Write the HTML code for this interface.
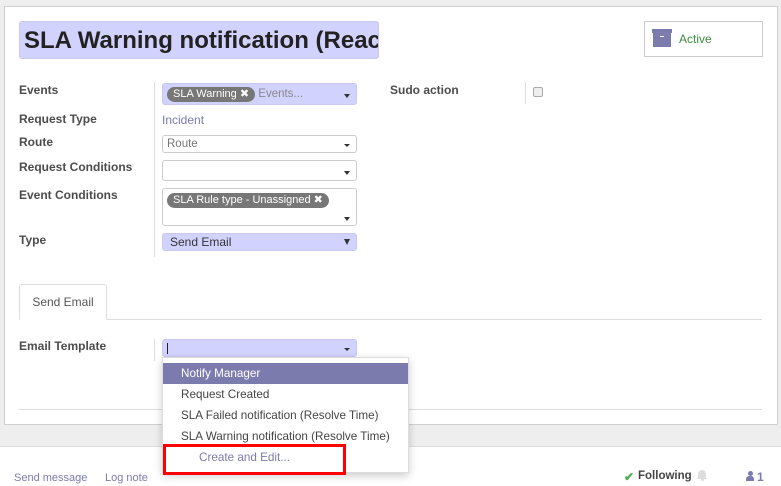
<!DOCTYPE html>
<html><head><style>
*{box-sizing:border-box}
body{margin:0;width:781px;height:486px;background:#eeeeee;font-family:"Liberation Sans",sans-serif;font-size:12px;color:#4c4c4c;position:relative;overflow:hidden}
.abs{position:absolute}
.sheet{left:4px;top:6px;width:774px;height:419px;background:#fff;border:1px solid #d0d0d0}
.lbl{position:absolute;left:19px;font-weight:bold;color:#4c4c4c;font-size:12px}
.inp{position:absolute;left:162px;width:195px;border:1px solid #ccc;border-radius:3px;background:#fff}
.lav{background:#d2d2ff;border-color:#c8c8f0}
.tag{display:inline-block;background:#777;color:#fff;border-radius:9px;padding:1px 6px;font-size:11px;line-height:13px}
.caret{position:absolute;right:6px;width:0;height:0;border-left:3px solid transparent;border-right:3px solid transparent;border-top:4px solid #333}
.vl{position:absolute;border-left:1px solid #ddd}
.dd div{height:21px;line-height:21px;padding-left:18px;font-size:11.7px;color:#444}
</style></head><body>
<div class="abs sheet"></div>
<div class="abs" style="left:19px;top:21px;width:360px;height:38px;background:#d2d2ff;border:1px solid #c8c8f0;border-radius:3px;overflow:hidden;white-space:nowrap;font-size:24px;font-weight:bold;color:#222;line-height:38px;padding-left:4px">SLA Warning notification (Reaction</div>
<div class="abs" style="left:644px;top:21px;width:119px;height:36px;border:1px solid #ccc"></div>
<div class="abs" style="left:652px;top:29px;width:20px;height:4px;background:#7c7bad"></div>
<div class="abs" style="left:653px;top:33px;width:18px;height:14px;background:#7c7bad"></div>
<div class="abs" style="left:660px;top:36px;width:4px;height:1px;background:#fff"></div>
<div class="abs" style="left:679px;top:32px;color:#3d8b3d;font-size:12px">Active</div>

<div class="vl" style="left:154px;top:82px;height:175px"></div>
<div class="vl" style="left:525px;top:82px;height:22px"></div>
<div class="lbl" style="top:83px">Events</div>
<div class="lbl" style="top:112px">Request Type</div>
<div class="lbl" style="top:135px">Route</div>
<div class="lbl" style="top:160px">Request Conditions</div>
<div class="lbl" style="top:188px">Event Conditions</div>
<div class="lbl" style="top:233px">Type</div>
<div class="lbl" style="left:390px;top:83px">Sudo action</div>
<div class="abs" style="left:533px;top:87px;width:10px;height:10px;border:1px solid #aaa;border-radius:2px;background:#eee"></div>

<div class="inp lav" style="top:83px;height:22px;padding:3px 4px;font-size:11.5px"><span class="tag">SLA Warning ✖</span><span style="color:#888"> Events...</span><div class="caret" style="top:10px"></div></div>
<div class="abs" style="left:162px;top:113px;color:#7c7bad">Incident</div>
<div class="inp" style="top:135px;height:18px;padding:2px 4px;color:#777;font-size:11.5px">Route<div class="caret" style="top:8px;border-top-width:3px"></div></div>
<div class="inp" style="top:160px;height:21px"><div class="caret" style="top:10px"></div></div>
<div class="inp" style="top:188px;height:38px;padding:3px 4px"><span class="tag">SLA Rule type - Unassigned ✖</span><div class="caret" style="top:28px"></div></div>
<div class="inp lav" style="top:233px;height:18px;padding:1px 7px;font-size:12px;color:#333">Send Email<div class="caret" style="top:5px;border-left-width:3.5px;border-right-width:3.5px;border-top-width:6px"></div></div>

<div class="abs" style="left:19px;top:319px;width:743px;border-top:1px solid #ddd"></div>
<div class="abs" style="left:19px;top:284px;width:88px;height:36px;border:1px solid #ddd;border-bottom:1px solid #fff;border-radius:3px 3px 0 0;background:#fff;text-align:center;line-height:34px;color:#555;font-size:12px">Send Email</div>
<div class="lbl" style="top:339px">Email Template</div>
<div class="vl" style="left:154px;top:339px;height:22px"></div>
<div class="inp lav" style="top:339px;height:18px"><div class="abs" style="left:4px;top:3px;width:1px;height:11px;background:#222"></div><div class="caret" style="top:8px;border-top-width:3px"></div></div>
<div class="abs" style="left:19px;top:409px;width:743px;border-top:1px solid #ddd"></div>

<div class="abs" style="left:0;top:446px;width:781px;height:40px;background:#fff;border-top:1px solid #ddd"></div>
<div class="abs" style="left:14px;top:472px;color:#7c7bad;font-size:11px">Send message</div>
<div class="abs" style="left:105px;top:472px;color:#7c7bad;font-size:11px">Log note</div>
<div class="abs" style="left:624px;top:470px;color:#4caf50;font-weight:bold">✔</div>
<div class="abs" style="left:638px;top:470px;font-weight:bold;color:#444;font-size:11.5px">Following</div>
<div class="abs" style="left:697px;top:470px;width:10px;height:10px"><div style="width:8px;height:8px;margin-left:1px;background:#ddd;border-radius:4px 4px 0 0"></div><div style="width:10px;height:1px;background:#ddd"></div><div style="width:3px;height:2px;margin-left:3.5px;background:#ddd;border-radius:0 0 2px 2px"></div></div>
<div class="abs" style="left:746px;top:471px;width:8px;height:10px"><div style="width:5px;height:5px;border-radius:50%;background:#7c7bad;margin-left:1.5px"></div><div style="width:8px;height:5px;background:#7c7bad;border-radius:3px 3px 0 0"></div></div>
<div class="abs" style="left:757px;top:470px;color:#7c7bad;font-weight:bold">1</div>

<div class="abs dd" style="left:162px;top:357px;width:247px;height:116px;background:#fff;border:1px solid #ddd;box-shadow:0 3px 8px rgba(0,0,0,.2);padding-top:5px">
<div style="background:#7c7bad;color:#fff">Notify Manager</div>
<div>Request Created</div>
<div>SLA Failed notification (Resolve Time)</div>
<div>SLA Warning notification (Resolve Time)</div>
<div style="color:#7c7bad;padding-left:36px">Create and Edit...</div>
</div>
<div class="abs" style="left:163px;top:444px;width:183px;height:31px;border:3px solid #f00"></div>
</body></html>
